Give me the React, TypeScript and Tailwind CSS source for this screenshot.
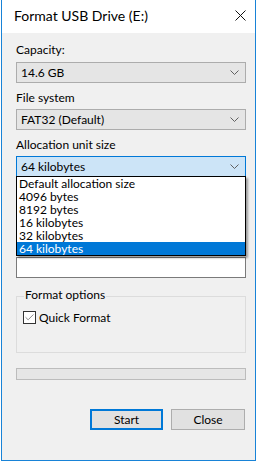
import { Check } from 'lucide-react';

const font = { fontFamily: '"Segoe UI", Lato, "Liberation Sans", sans-serif' };

const Chevron = () => (
    <svg width="9" height="5" viewBox="0 0 9 5" className="shrink-0">
        <path d="M0.5 0.5 L4.5 4.5 L8.5 0.5" fill="none" stroke="#606060" strokeWidth="1" />
    </svg>
);

type ComboProps = { value: string; active?: boolean };

const Combo = ({ value, active }: ComboProps) => (
    <div
        className={`w-[230px] h-[21px] flex items-center justify-between pl-[4px] pr-[6px] border ${
            active ? 'bg-[#cce4f7] border-[#0078d7]' : 'bg-[#e5e5e5] border-[#acacac]'
        }`}
    >
        <span className="text-[12px] leading-none text-black">{value}</span>
        <Chevron />
    </div>
);

const items = ['Default allocation size', '4096 bytes', '8192 bytes', '16 kilobytes', '32 kilobytes', '64 kilobytes'];

export default function App() {
    return (
        <div className="w-[260px] h-[464px] bg-white" style={font}>
            <div className="ml-px w-[255px] h-[461px] border-x border-b border-[#1883d7] bg-[#f0f0f0] flex flex-col">

                {/* Title bar */}
                <div className="h-[33px] bg-white flex items-center justify-between pl-[12px] pr-[8px] shrink-0">
                    <span className="text-[14px] text-black leading-none -mt-[2px]">Format USB Drive (E:)</span>
                    <svg width="11" height="11" viewBox="0 0 11 11" className="mr-[1px] -mt-[2px]">
                        <path d="M0.5 0.5 L10.5 10.5 M10.5 0.5 L0.5 10.5" stroke="#111" strokeWidth="1" />
                    </svg>
                </div>

                {/* Body */}
                <div className="pl-[14px] flex flex-col text-[12px] text-black">
                    <div className="h-[29px] flex items-center pt-[5px]">Capacity:</div>
                    <Combo value="14.6 GB" />
                    <div className="h-[26px] flex items-center pt-[4px]">File system</div>
                    <Combo value="FAT32 (Default)" />
                    <div className="h-[26px] flex items-center pt-[4px]">Allocation unit size</div>

                    <div className="relative">
                        <Combo value="64 kilobytes" active />
                        {/* Open dropdown list */}
                        <div className="absolute left-0 top-[20px] w-[230px] bg-white border border-black shadow-[2px_2px_2px_rgba(0,0,0,0.35)] z-10">
                            {items.map((it) => (
                                <div
                                    key={it}
                                    className={`h-[13px] pl-[2px] text-[12px] leading-[13px] overflow-hidden ${
                                        it === '64 kilobytes' ? 'bg-[#0078d7] text-white' : 'text-black'
                                    }`}
                                >
                                    {it}
                                </div>
                            ))}
                        </div>
                    </div>

                    {/* Hidden behind list: restore button + volume label */}
                    <div className="h-[80px]" />
                    <div className="w-[230px] h-[21px] bg-white border border-[#7a7a7a]" />

                    {/* Format options group */}
                    <div className="mt-[18px] w-[230px] h-[57px] border border-[#dcdcdc] relative">
                        <span className="absolute -top-[8px] left-[7px] px-[1px] bg-[#f0f0f0] leading-none text-[12px]">
                            Format options
                        </span>
                        <div className="flex items-center gap-[3px] mt-[14px] ml-[6px]">
                            <div className="w-[13px] h-[13px] border border-[#333] bg-white flex items-center justify-center">
                                <Check size={11} strokeWidth={1.5} color="#555" />
                            </div>
                            <span className="leading-none">Quick Format</span>
                        </div>
                    </div>

                    {/* Progress bar */}
                    <div className="mt-[15px] w-[230px] h-[12px] bg-[#e6e6e6] border border-[#bcbcbc]" />

                    {/* Buttons */}
                    <div className="mt-[29px] flex gap-[8px] pl-[74px]">
                        <button className="w-[73px] h-[21px] bg-[#e1e1e1] border-2 border-[#0078d7] text-[12px] leading-none text-black">
                            Start
                        </button>
                        <button className="w-[74px] h-[21px] bg-[#e1e1e1] border border-[#adadad] text-[12px] leading-none text-black">
                            Close
                        </button>
                    </div>
                </div>
            </div>
        </div>
    );
}
